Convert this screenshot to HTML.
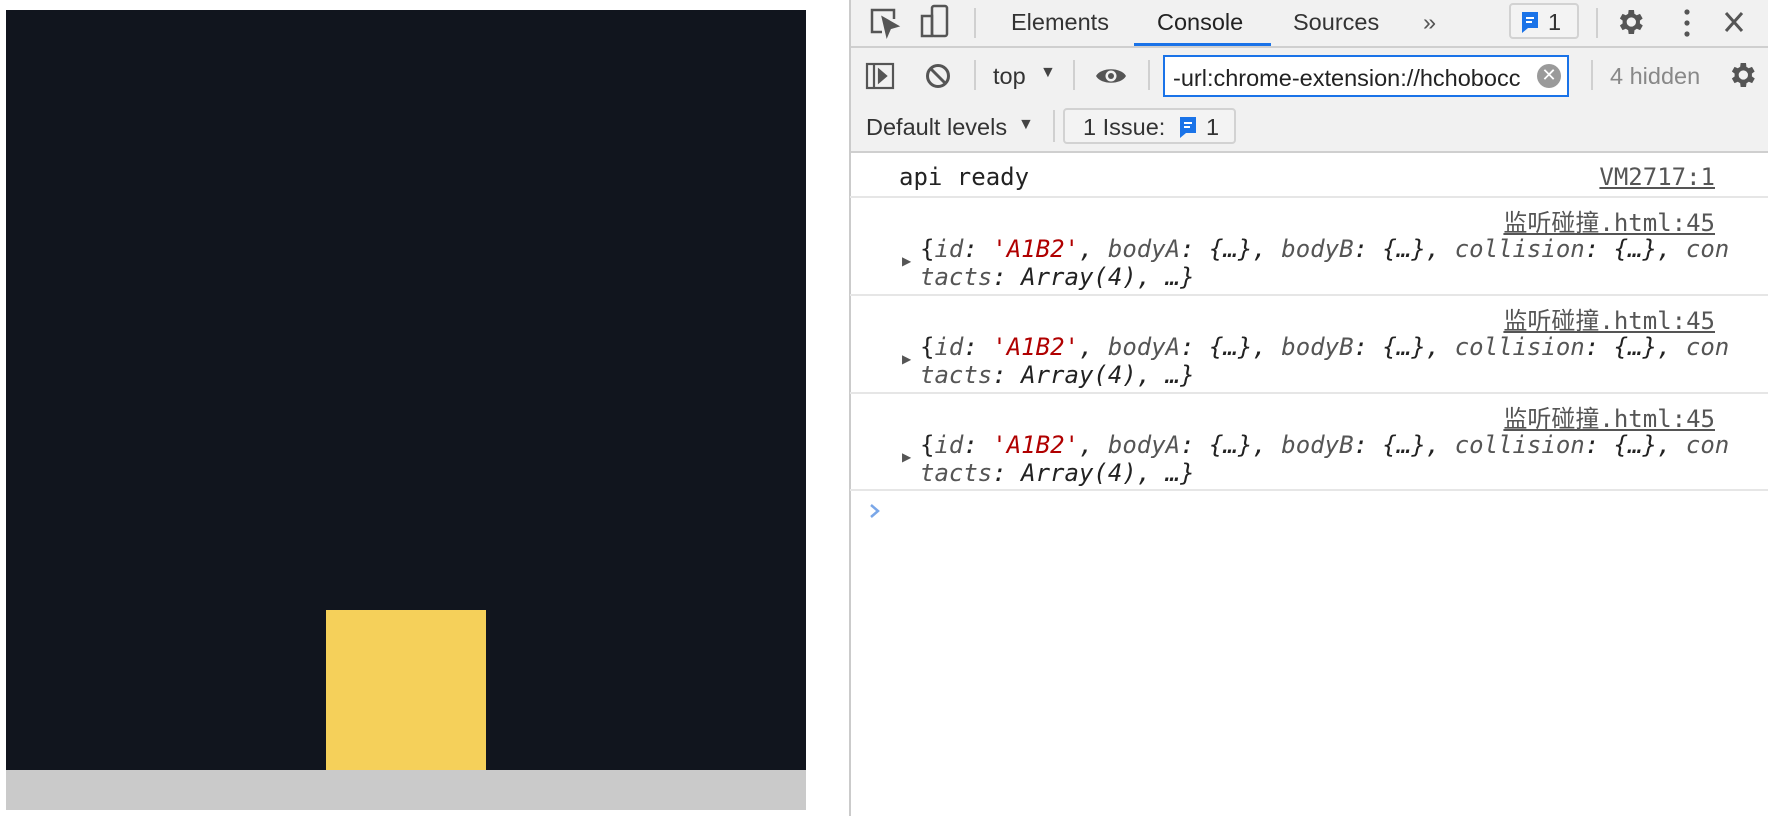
<!DOCTYPE html>
<html><head><meta charset="utf-8"><style>
*{margin:0;padding:0;box-sizing:border-box}
body{width:1768px;height:816px;background:#fff;position:relative;overflow:hidden;font-family:"Liberation Sans",Arial,sans-serif}
.a{position:absolute}
.mono{font-family:"DejaVu Sans Mono","Liberation Mono","Noto Sans CJK SC",monospace;font-size:24px;white-space:pre;color:#222}
.tab{font-size:23.5px;color:#333;top:9px}
.k{font-style:italic;color:#555}
.v{font-style:italic;color:#222}
.s{font-style:italic;color:#b00000}
.src{color:#555;text-decoration:underline;font-size:24px;right:53px}
.sep{left:850px;width:918px;height:2px;background:#e6e6e6}
.vs{width:2px;background:#d0d0d0}
</style></head><body>
<div class="a" style="left:6px;top:10px;width:800px;height:760px;background:#11151e"></div>
<div class="a" style="left:6px;top:770px;width:800px;height:40px;background:#cacaca"></div>
<div class="a" style="left:326px;top:610px;width:160px;height:160px;background:#f5d05a"></div>
<div class="a" style="left:849px;top:0;width:2px;height:816px;background:#cbcbcb"></div>
<div class="a" style="left:851px;top:0;width:917px;height:152px;background:#f1f1f1"></div>
<div class="a" style="left:851px;top:46px;width:917px;height:2px;background:#cfcfcf"></div>
<div class="a" style="left:851px;top:151px;width:917px;height:2px;background:#cfcfcf"></div>
<svg class="a" style="left:868px;top:6px" width="36" height="34" viewBox="0 0 36 34" fill="none" stroke="#555" stroke-width="2.5"><path d="M14 26H4V4h22v9"/><path d="M15 12l4 17 3-7 7-2z" fill="#555"/></svg>
<svg class="a" style="left:920px;top:4px" width="30" height="36" viewBox="0 0 30 36" fill="none" stroke="#555" stroke-width="2.5"><rect x="12" y="2" width="15" height="30" rx="2"/><rect x="2" y="12" width="10" height="20"/></svg>
<div class="a vs" style="left:974px;top:8px;height:30px"></div>
<div class="a tab" style="left:1011px">Elements</div>
<div class="a tab" style="left:1157px;color:#222">Console</div>
<div class="a" style="left:1134px;top:43px;width:137px;height:3px;background:#1a73e8"></div>
<div class="a tab" style="left:1293px">Sources</div>
<div class="a tab" style="left:1423px;color:#555">»</div>
<div class="a" style="left:1509px;top:3px;width:70px;height:36px;border:2px solid #d2d2d2;border-radius:4px;background:#f3f3f3"></div>
<svg class="a" style="left:1520px;top:10px" width="20" height="24" viewBox="0 0 20 24"><path d="M2 2h16v16H8l-6 5z" fill="#1a73e8"/><path d="M6 8h8M6 12h6" stroke="#fff" stroke-width="2"/></svg>
<div class="a" style="left:1548px;top:9px;font-size:23.5px;color:#333">1</div>
<div class="a vs" style="left:1596px;top:8px;height:30px"></div>
<svg class="a" style="left:1614px;top:6px" width="32" height="32" viewBox="0 0 24 24"><path fill="#555" d="M19.4 13a7.5 7.5 0 000-2l2.1-1.6-2-3.5-2.5 1a7 7 0 00-1.7-1L15 3h-4l-.4 2.9a7 7 0 00-1.7 1l-2.5-1-2 3.5L6.5 11a7.5 7.5 0 000 2l-2.1 1.6 2 3.5 2.5-1a7 7 0 001.7 1L11 21h4l.4-2.9a7 7 0 001.7-1l2.5 1 2-3.5zM13 15.5a3.5 3.5 0 110-7 3.5 3.5 0 010 7z"/></svg>
<svg class="a" style="left:1682px;top:7px" width="10" height="32"><circle cx="5" cy="5" r="2.6" fill="#555"/><circle cx="5" cy="16" r="2.6" fill="#555"/><circle cx="5" cy="27" r="2.6" fill="#555"/></svg>
<svg class="a" style="left:1723px;top:10px" width="22" height="24"><path d="M3 3l16 18M19 3L3 21" stroke="#555" stroke-width="3"/></svg>
<svg class="a" style="left:865px;top:62px" width="30" height="28" viewBox="0 0 30 28" fill="none" stroke="#555" stroke-width="2.2"><rect x="2" y="2" width="26" height="24"/><path d="M9 2v24"/><path d="M14 8l7 6-7 6z" fill="#555"/></svg>
<svg class="a" style="left:924px;top:62px" width="28" height="28"><circle cx="14" cy="14" r="10.5" fill="none" stroke="#555" stroke-width="3"/><path d="M7 7l14 14" stroke="#555" stroke-width="3"/></svg>
<div class="a vs" style="left:974px;top:60px;height:30px"></div>
<div class="a" style="left:993px;top:63px;font-size:23.5px;color:#333">top</div>
<div class="a" style="left:1040px;top:64px;font-size:16px;color:#444">▼</div>
<div class="a vs" style="left:1073px;top:60px;height:30px"></div>
<svg class="a" style="left:1094px;top:64px" width="34" height="24" viewBox="0 0 34 24"><path d="M2 12C7 3 27 3 32 12 27 21 7 21 2 12z" fill="#555"/><circle cx="17" cy="12" r="5.5" fill="#f1f1f1"/><circle cx="17" cy="12" r="3" fill="#555"/></svg>
<div class="a vs" style="left:1148px;top:60px;height:30px"></div>
<div class="a" style="left:1163px;top:55px;width:406px;height:42px;border:2px solid #1a73e8;background:#fff;overflow:hidden">
<div class="a" style="left:8px;top:8px;font-size:23.5px;color:#222;white-space:nowrap">-url:chrome-extension://hchobocc</div>
<div class="a" style="right:6px;top:7px;width:24px;height:24px;border-radius:50%;background:#9a9a9a;color:#fff;font-size:18px;line-height:23px;text-align:center">✕</div>
</div>
<div class="a vs" style="left:1591px;top:60px;height:30px"></div>
<div class="a" style="left:1610px;top:63px;font-size:23.5px;color:#888">4 hidden</div>
<svg class="a" style="left:1726px;top:59px" width="32" height="32" viewBox="0 0 24 24"><path fill="#555" d="M19.4 13a7.5 7.5 0 000-2l2.1-1.6-2-3.5-2.5 1a7 7 0 00-1.7-1L15 3h-4l-.4 2.9a7 7 0 00-1.7 1l-2.5-1-2 3.5L6.5 11a7.5 7.5 0 000 2l-2.1 1.6 2 3.5 2.5-1a7 7 0 001.7 1L11 21h4l.4-2.9a7 7 0 001.7-1l2.5 1 2-3.5zM13 15.5a3.5 3.5 0 110-7 3.5 3.5 0 010 7z"/></svg>
<div class="a" style="left:866px;top:114px;font-size:23.5px;color:#333">Default levels</div>
<div class="a" style="left:1018px;top:116px;font-size:16px;color:#444">▼</div>
<div class="a vs" style="left:1053px;top:110px;height:32px"></div>
<div class="a" style="left:1063px;top:108px;width:173px;height:36px;border:2px solid #d2d2d2;border-radius:4px;background:#f3f3f3"></div>
<div class="a" style="left:1083px;top:114px;font-size:23.5px;color:#333">1 Issue:</div>
<svg class="a" style="left:1178px;top:115px" width="20" height="24" viewBox="0 0 20 24"><path d="M2 2h16v16H8l-6 5z" fill="#1a73e8"/><path d="M6 8h8M6 12h6" stroke="#fff" stroke-width="2"/></svg>
<div class="a" style="left:1206px;top:114px;font-size:23.5px;color:#333">1</div>
<div class="a mono" style="left:899px;top:163px">api ready</div>
<div class="a mono src" style="top:163px">VM2717:1</div>
<div class="a sep" style="top:196px"></div>

<div class="a mono src" style="top:203px">监听碰撞.html:45</div>
<div class="a mono" style="left:920px;top:235px">{<span class="k">id</span><span class="v">: </span><span class="s">'A1B2'</span><span class="v">, </span><span class="k">bodyA</span><span class="v">: {…}, </span><span class="k">bodyB</span><span class="v">: {…}, </span><span class="k">collision</span><span class="v">: {…}, </span><span class="k">con</span></div>
<div class="a mono" style="left:920px;top:263px"><span class="k">tacts</span><span class="v">: Array(4), …}</span></div>
<div class="a" style="left:902px;top:254px;font-size:12px;color:#555">▶</div>
<div class="a sep" style="top:294px"></div>

<div class="a mono src" style="top:301px">监听碰撞.html:45</div>
<div class="a mono" style="left:920px;top:333px">{<span class="k">id</span><span class="v">: </span><span class="s">'A1B2'</span><span class="v">, </span><span class="k">bodyA</span><span class="v">: {…}, </span><span class="k">bodyB</span><span class="v">: {…}, </span><span class="k">collision</span><span class="v">: {…}, </span><span class="k">con</span></div>
<div class="a mono" style="left:920px;top:361px"><span class="k">tacts</span><span class="v">: Array(4), …}</span></div>
<div class="a" style="left:902px;top:352px;font-size:12px;color:#555">▶</div>
<div class="a sep" style="top:392px"></div>

<div class="a mono src" style="top:399px">监听碰撞.html:45</div>
<div class="a mono" style="left:920px;top:431px">{<span class="k">id</span><span class="v">: </span><span class="s">'A1B2'</span><span class="v">, </span><span class="k">bodyA</span><span class="v">: {…}, </span><span class="k">bodyB</span><span class="v">: {…}, </span><span class="k">collision</span><span class="v">: {…}, </span><span class="k">con</span></div>
<div class="a mono" style="left:920px;top:459px"><span class="k">tacts</span><span class="v">: Array(4), …}</span></div>
<div class="a" style="left:902px;top:450px;font-size:12px;color:#555">▶</div>
<div class="a sep" style="top:489px"></div>

<svg class="a" style="left:868px;top:502px" width="14" height="18"><path d="M3 3l7 6-7 6" fill="none" stroke="#7aa7e8" stroke-width="2.5"/></svg>
</body></html>
